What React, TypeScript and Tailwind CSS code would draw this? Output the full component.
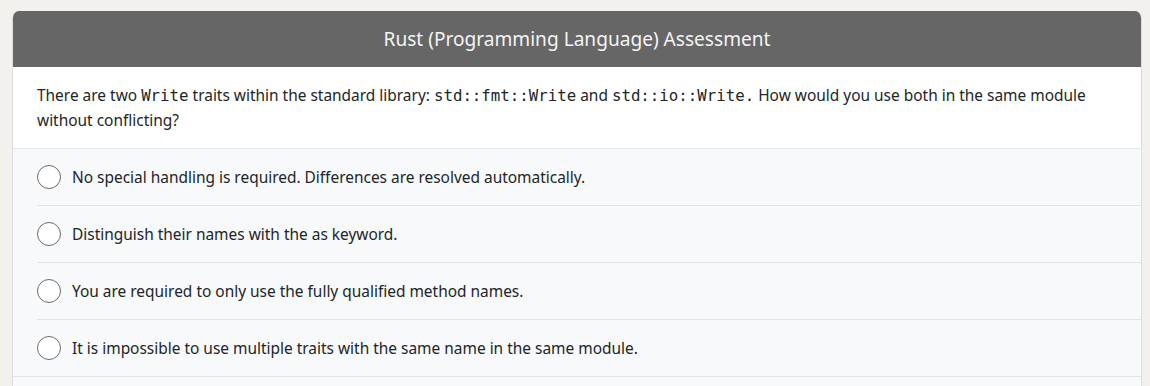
const options = [
  "No special handling is required. Differences are resolved automatically.",
  "Distinguish their names with the as keyword.",
  "You are required to only use the fully qualified method names.",
  "It is impossible to use multiple traits with the same name in the same module.",
];

function Code({ children }: { children: string }) {
  return (
    <code className="text-[15.75px]" style={{ fontFamily: '"DejaVu Sans Mono", monospace' }}>
      {children}
    </code>
  );
}

export default function App() {
  return (
    <div
      className="min-h-[386px] bg-[#f2f1ee] pt-[11px] pl-[12px] pr-[8px]"
      style={{ fontFamily: '"Noto Sans", sans-serif' }}
    >
      <div className="overflow-hidden rounded-t-[7px] border-x border-[#dcdcdc] bg-[#f8f9fa] min-h-[375px]">
        <div className="flex h-[56px] items-center justify-center bg-[#666666] text-[19.1px] text-[#f4f4f4]">
          Rust (Programming Language) Assessment
        </div>
        <div className="border-b border-[#e3e4e6] bg-white px-6 py-4 text-[15.45px] leading-6 text-[#212529]">
          There are two <Code>Write</Code> traits within the standard library: <Code>std::fmt::Write</Code> and{" "}
          <Code>std::io::Write.</Code> How would you use both in the same module without conflicting?
        </div>
        <div className="border-b border-[#e3e4e6] pl-6">
          {options.map((o, i) => (
            <div
              key={i}
              className={`flex items-center gap-[11px] py-4 text-[15.45px] leading-6 text-[#212529] ${
                i > 0 ? "border-t border-[#e3e4e6]" : ""
              }`}
            >
              <span className="h-6 w-6 shrink-0 rounded-full border-[1.5px] border-[#6b6b6b] bg-white" />
              <span>{o}</span>
            </div>
          ))}
        </div>
      </div>
    </div>
  );
}
